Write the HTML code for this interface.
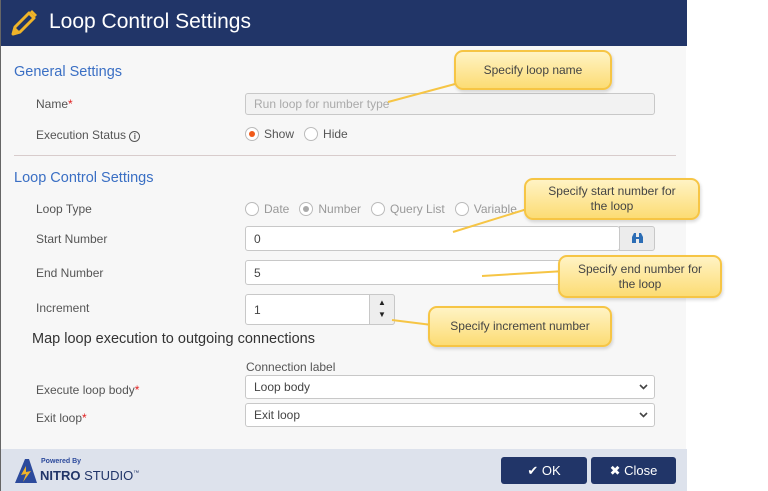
<!DOCTYPE html>
<html><head><meta charset="utf-8"><style>
*{box-sizing:border-box;margin:0;padding:0}
body{width:768px;height:491px;background:#fff;font-family:"Liberation Sans",sans-serif;position:relative;overflow:hidden;color:#555;font-size:12px}
.dlg{position:absolute;left:0;top:0;width:686px;height:491px;background:#f7f7f7;border-left:1px solid #666}
.hdr{position:absolute;left:0;top:0;width:686px;height:46px;background:#213568}
.hdr .t{position:absolute;left:48px;top:10px;color:#fff;font-size:21px}
.a{position:absolute}
.sec{color:#3a6fc4;font-size:14.5px}
.lbl{font-size:12px;color:#555}
.req{color:#e02020}
.inp{position:absolute;background:#fff;border:1px solid #c8c8c8;border-radius:3px;font-size:12px;color:#444;padding-left:8px;display:flex;align-items:center}
.radio{display:inline-block;width:14px;height:14px;border:1px solid #bbb;border-radius:50%;background:#fff;vertical-align:middle;position:relative}
.radio.on::after{content:"";position:absolute;left:3px;top:3px;width:6px;height:6px;border-radius:50%;background:#f05a1a}
.radio.dis.on::after{background:#aaa}
.rl{vertical-align:middle;margin:0 10px 0 5px}
.co{position:absolute;border:2px solid #f6c545;border-radius:9px;color:#444;font-size:12px;text-align:center;line-height:15px;display:flex;align-items:center;justify-content:center;box-shadow:1px 2px 3px rgba(0,0,0,.15);background:linear-gradient(#fff3c4,#fcdc74)}
.ftr{position:absolute;left:0;top:449px;width:686px;height:42px;background:#dde2ec}
.btn{position:absolute;top:8px;height:27px;background:#213568;border-radius:3px;color:#fff;font-size:13px;display:flex;align-items:center;justify-content:center}
.chev{position:absolute;right:6px;top:8px}
</style></head><body>
<div class="dlg">
<div class="hdr">
<svg class="a" style="left:9px;top:9px" width="28" height="28" viewBox="0 0 28 28"><path d="M3 25 L5 18 L19 4 L24 9 L10 23 Z" fill="none" stroke="#f0b429" stroke-width="3" stroke-linejoin="round"/><path d="M20 3 L22 1 L27 6 L25 8 Z" fill="#f0b429"/><path d="M3 25 L5 18 L10 23 Z" fill="#f0b429"/></svg>
<div class="t">Loop Control Settings</div>
</div>
<div class="a sec" style="left:13px;top:64px">General Settings</div>
<div class="a lbl" style="left:35px;top:97px">Name<span class="req">*</span></div>
<div class="inp" style="left:244px;top:93px;width:410px;height:22px;background:#f2f2f2;color:#aaa">Run loop for number type</div>
<div class="a lbl" style="left:35px;top:128px">Execution Status <span style="display:inline-block;width:11px;height:11px;border:1px solid #555;border-radius:50%;font-size:8px;text-align:center;line-height:9px;font-weight:bold">i</span></div>
<div class="a" style="left:244px;top:126px;font-size:12px"><span class="radio on"></span><span class="rl">Show</span><span class="radio"></span><span class="rl">Hide</span></div>
<div class="a" style="left:13px;top:155px;width:662px;height:1px;background:#d8cccc"></div>
<div class="a sec" style="left:13px;top:170px">Loop Control Settings</div>
<div class="a lbl" style="left:35px;top:202px">Loop Type</div>
<div class="a" style="left:244px;top:201px;font-size:12px;color:#999"><span class="radio"></span><span class="rl">Date</span><span class="radio dis on"></span><span class="rl">Number</span><span class="radio"></span><span class="rl">Query List</span><span class="radio"></span><span class="rl">Variable</span></div>
<div class="a lbl" style="left:35px;top:232px">Start Number</div>
<div class="inp" style="left:244px;top:226px;width:375px;height:25px">0</div>
<div class="a" style="left:618px;top:226px;width:36px;height:25px;background:#ececec;border:1px solid #c8c8c8;border-radius:0 3px 3px 0"><svg class="a" style="left:11px;top:6px" width="13" height="11" viewBox="0 0 13 11"><path d="M1 4 L3 0 L5 0 L5 4 L8 4 L8 0 L10 0 L12 4 L12 10 L8 10 L8 6 L5 6 L5 10 L1 10 Z" fill="#2c6db5"/></svg></div>
<div class="a lbl" style="left:35px;top:266px">End Number</div>
<div class="inp" style="left:244px;top:260px;width:410px;height:25px">5</div>
<div class="a lbl" style="left:35px;top:301px">Increment</div>
<div class="inp" style="left:244px;top:294px;width:150px;height:31px">1</div>
<div class="a" style="left:368px;top:294px;width:26px;height:31px;background:#eee;border:1px solid #c8c8c8;border-radius:0 3px 3px 0;font-size:8px;text-align:center;line-height:12px;color:#222;padding-top:2px">▲<br>▼</div>
<div class="a" style="left:31px;top:331px;font-size:14.5px;color:#333">Map loop execution to outgoing connections</div>
<div class="a lbl" style="left:245px;top:360px">Connection label</div>
<div class="a lbl" style="left:35px;top:383px">Execute loop body<span class="req">*</span></div>
<div class="inp" style="left:244px;top:375px;width:410px;height:24px">Loop body<svg class="chev" width="9" height="6" viewBox="0 0 9 6"><path d="M1 1 L4.5 4.5 L8 1" fill="none" stroke="#444" stroke-width="1.6"/></svg></div>
<div class="a lbl" style="left:35px;top:411px">Exit loop<span class="req">*</span></div>
<div class="inp" style="left:244px;top:403px;width:410px;height:24px">Exit loop<svg class="chev" width="9" height="6" viewBox="0 0 9 6"><path d="M1 1 L4.5 4.5 L8 1" fill="none" stroke="#444" stroke-width="1.6"/></svg></div>
<div class="ftr">
<svg class="a" style="left:12px;top:9px" width="26" height="26" viewBox="0 0 26 26"><path d="M2 25 L12 1 L16 1 L24 25 Z" fill="#2c4a9c"/><path d="M13 8 L8 17 L13 16 L10 24 L18 13 L13 14 Z" fill="#f0b429"/></svg>
<div class="a" style="left:40px;top:9px;font-size:7px;color:#2c4a9c;font-weight:bold">Powered By</div>
<div class="a" style="left:39px;top:19px;font-size:13px;color:#213568"><b>NITRO</b> STUDIO<sup style="font-size:6px">™</sup></div>
<div class="btn" style="left:500px;width:86px">✔ OK</div>
<div class="btn" style="left:590px;width:85px">✖ Close</div>
</div>
</div>
<svg class="a" style="left:0;top:0" width="768" height="491">
<g stroke="#f6c545" stroke-width="2" fill="none">
<line x1="388" y1="102" x2="470" y2="80"/>
<line x1="453" y1="232" x2="540" y2="205"/>
<line x1="482" y1="276" x2="565" y2="271"/>
<line x1="392" y1="320" x2="432" y2="325"/>
</g></svg>
<div class="co" style="left:454px;top:50px;width:158px;height:40px">Specify loop name</div>
<div class="co" style="left:524px;top:178px;width:176px;height:42px">Specify start number for<br>the loop</div>
<div class="co" style="left:558px;top:255px;width:164px;height:43px">Specify end number for<br>the loop</div>
<div class="co" style="left:428px;top:306px;width:184px;height:41px">Specify increment number</div>
</body></html>
